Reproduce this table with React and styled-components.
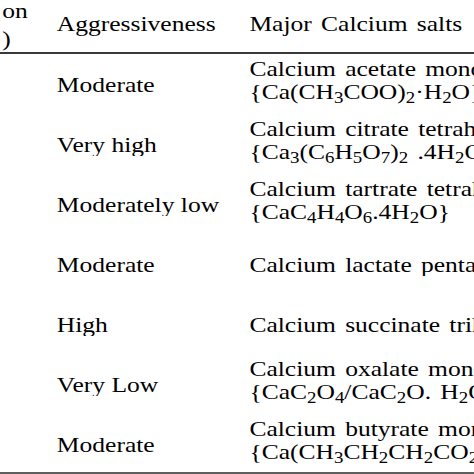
import React from "react";
import styled, { createGlobalStyle } from "styled-components";

const GlobalStyle = createGlobalStyle`
  html, body {
    margin: 0;
    padding: 0;
    background: #fff;
    overflow: hidden;
  }
`;

const Page = styled.div`
  width: 474px;
  height: 474px;
  overflow: hidden;
  background: #fff;
`;

// the scanned table is wider than Times would set it, so stretch it sideways
const Table = styled.div`
  width: 470px;
  transform: scaleX(1.16);
  transform-origin: 0 0;
  font-family: "Liberation Serif", "Times New Roman", serif;
  font-size: 22px;
  line-height: 23px;
  color: #000;
  white-space: nowrap;
`;

const Head = styled.div`
  display: grid;
  grid-template-columns: 49px 166px 1fr;
  height: 52px;
  border-bottom: 2px solid #3a3a3a;
`;

const HeadFirst = styled.div`
  margin-top: -3px;
  padding-left: 2px;
  line-height: 28px;
`;

const HeadCell = styled.div`
  padding-top: 12px;
  word-spacing: ${(p) => (p.$wide ? "2.5px" : "0")};
`;

const Body = styled.div`
  height: 418px;
  overflow: hidden;
  border-bottom: 2px solid #5e5e5e;
`;

const Row = styled.div`
  display: grid;
  grid-template-columns: 49px 166px 1fr;
  align-items: center;
  height: 60px;
`;

const Cell = styled.div`
  overflow: hidden;
`;

const SaltCell = styled.div`
  padding-bottom: ${(p) => (p.$double ? "8px" : "0")};
  word-spacing: 2.5px;
  overflow: hidden;
`;

const Sub = styled.sub`
  font-size: 0.74em;
  vertical-align: -0.26em;
  line-height: 0;
`;

const rows = [
  {
    level: "Moderate",
    salt: "Calcium acetate monohydrate",
    formula: (
      <>
        {"{Ca(CH"}<Sub>3</Sub>{"COO)"}<Sub>2</Sub>{"·H"}<Sub>2</Sub>{"O}"}
      </>
    ),
  },
  {
    level: "Very high",
    salt: "Calcium citrate tetrahydrate",
    formula: (
      <>
        {"{Ca"}<Sub>3</Sub>{"(C"}<Sub>6</Sub>{"H"}<Sub>5</Sub>{"O"}<Sub>7</Sub>{")"}<Sub>2</Sub>{" .4H"}<Sub>2</Sub>{"O}"}
      </>
    ),
  },
  {
    level: "Moderately low",
    salt: "Calcium tartrate tetrahydrate",
    formula: (
      <>
        {"{CaC"}<Sub>4</Sub>{"H"}<Sub>4</Sub>{"O"}<Sub>6</Sub>{".4H"}<Sub>2</Sub>{"O}"}
      </>
    ),
  },
  { level: "Moderate", salt: "Calcium lactate pentahydrate" },
  { level: "High", salt: "Calcium succinate trihydrate" },
  {
    level: "Very Low",
    salt: "Calcium oxalate monohydrate",
    formula: (
      <>
        {"{CaC"}<Sub>2</Sub>{"O"}<Sub>4</Sub>{"/CaC"}<Sub>2</Sub>{"O. H"}<Sub>2</Sub>{"O}"}
      </>
    ),
  },
  {
    level: "Moderate",
    salt: "Calcium butyrate monohydrate",
    formula: (
      <>
        {"{Ca(CH"}<Sub>3</Sub>{"CH"}<Sub>2</Sub>{"CH"}<Sub>2</Sub>{"CO"}<Sub>2</Sub>{")"}<Sub>2</Sub>{".H"}<Sub>2</Sub>{"O}"}
      </>
    ),
  },
];

export default function App() {
  return (
    <Page>
      <GlobalStyle />
      <Table>
        <Head>
          <HeadFirst>
            <div>on</div>
            <div>)</div>
          </HeadFirst>
          <HeadCell>Aggressiveness</HeadCell>
          <HeadCell $wide>Major Calcium salts</HeadCell>
        </Head>
        <Body>
          {rows.map((r, i) => (
            <Row key={i}>
              <Cell />
              <Cell>{r.level}</Cell>
              <SaltCell $double={!!r.formula}>
                <div>{r.salt}</div>
                {r.formula && <div>{r.formula}</div>}
              </SaltCell>
            </Row>
          ))}
        </Body>
      </Table>
    </Page>
  );
}
